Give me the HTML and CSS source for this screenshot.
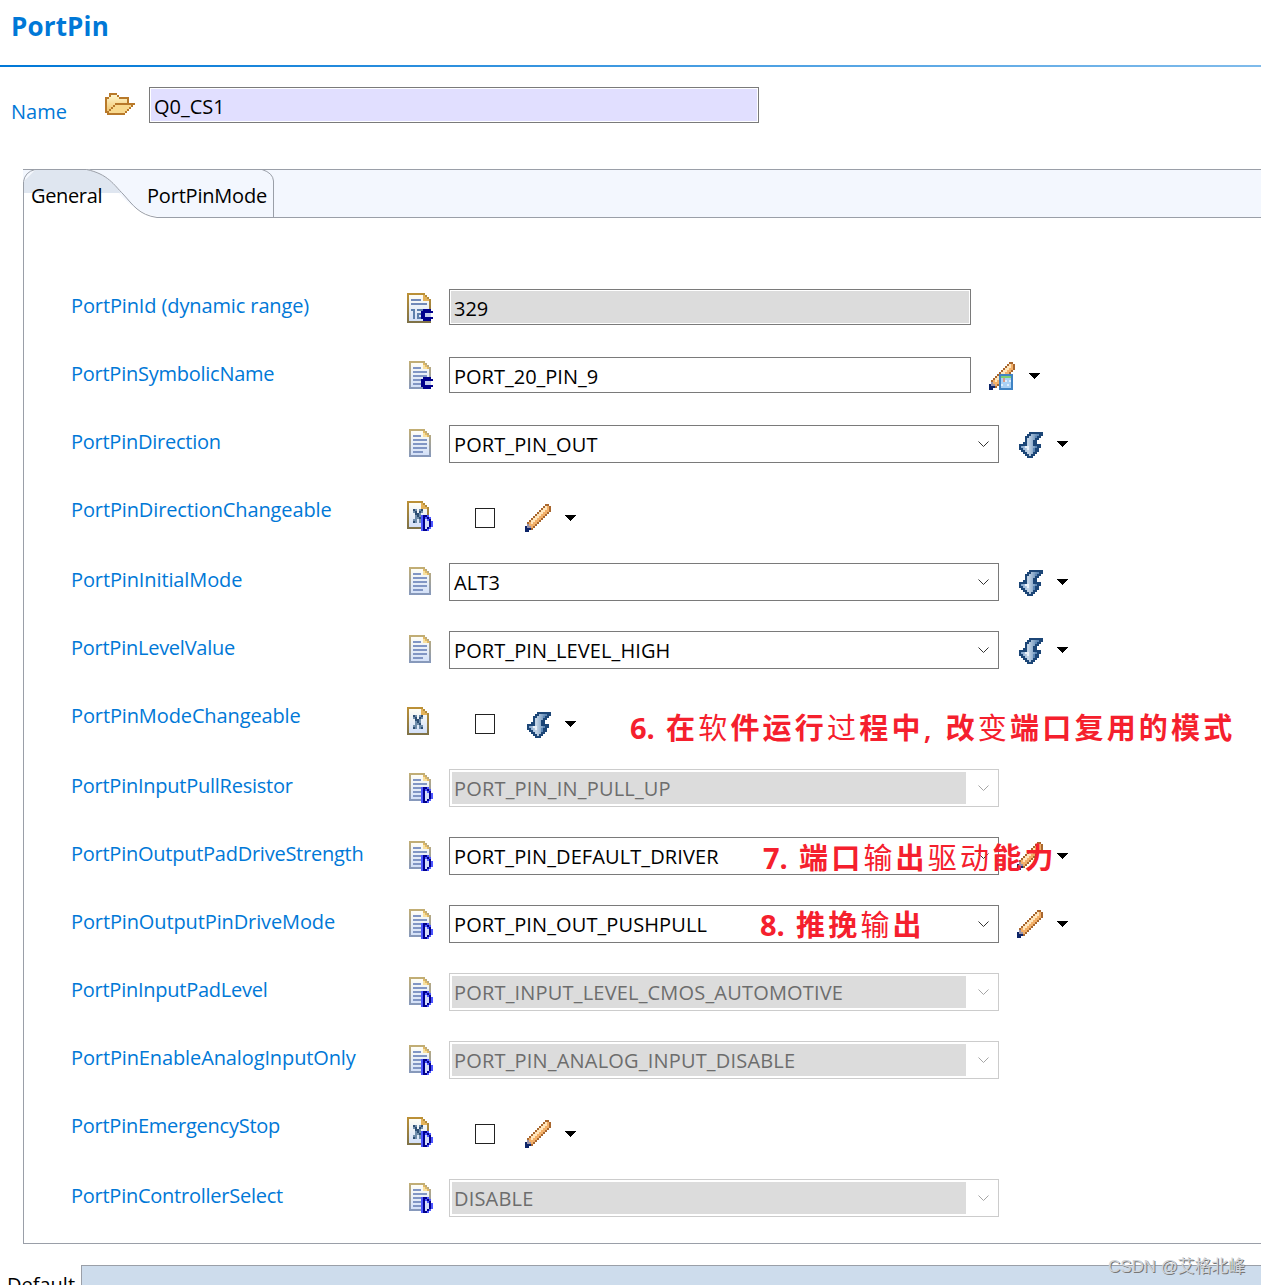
FILE: index.html
```html
<!DOCTYPE html>
<html lang="zh">
<head>
<meta charset="UTF-8">
<title>PortPin</title>
<link rel="stylesheet" href="styles.css">
</head>

<body>

<!-- icon sprites, one unit is one icon pixel -->
<svg class="sprites">
<defs>
<linearGradient id="paper" x1="0" y1="0" x2="0" y2="1">
<stop offset="0" stop-color="#fffef6"/><stop offset="1" stop-color="#d3e0f8"/>
</linearGradient>
<linearGradient id="edge" x1="0" y1="0" x2="0" y2="1">
<stop offset="0" stop-color="#c3ae72"/><stop offset="1" stop-color="#8598bd"/>
</linearGradient>
<linearGradient id="gold" x1="0" y1="0" x2="0" y2="1">
<stop offset="0" stop-color="#bd9136"/><stop offset="1" stop-color="#7d7148"/>
</linearGradient>
<linearGradient id="bolt" x1="0" y1="0" x2="1" y2="0">
<stop offset="0" stop-color="#7fa3cc"/><stop offset=".4" stop-color="#c7d7e8"/><stop offset="1" stop-color="#4f7cab"/>
</linearGradient>
<linearGradient id="folder" x1="0" y1="0" x2="0" y2="1">
<stop offset="0" stop-color="#fff6cc"/><stop offset="1" stop-color="#f0c670"/>
</linearGradient>

<symbol id="doc" viewBox="0 0 13 16">
<path fill="url(#edge)" d="M1 0h8v1h1v1h1v1h1v11h-11z"/>
<path fill="url(#paper)" d="M2 1h6v3h3v9h-9z"/>
<path fill="#e3b964" d="M8 1h1v1h1v1h1v1h-3z"/>
<path fill="#f7e0a0" d="M8 2h1v1h1v1h-2z"/>
<path fill="#8196c4" d="M3 3h4v1h-4zM3 5h7v1h-7zM3 7h7v1h-7zM3 9h7v1h-7zM3 11h5v1h-5z"/>
</symbol>

<symbol id="doc-num" viewBox="0 0 13 16">
<path fill="url(#gold)" d="M0 0h9v1h1v1h1v1h1v12h-12z"/>
<path fill="url(#paper)" d="M1 1h7v3h3v10h-10z"/>
<path fill="#e3b25a" d="M8 1h1v1h1v1h1v1h-3z"/>
<path fill="#7189b8" d="M2 3h5v1h-5zM2 5h8v1h-8z"/>
<path fill="#5d7fac" d="M2 8h2v5h-1v-4h-1zM5 8h3v3h-2v1h2v1h-3v-3h2v-1h-2zM9 8h2v5h-2z"/>
</symbol>

<symbol id="doc-x" viewBox="0 0 13 16">
<path fill="url(#gold)" d="M0 0h8v1h1v1h1v1h1v11h-11z"/>
<path fill="url(#paper)" d="M1 1h6v3h3v9h-9z"/>
<path fill="#e3b25a" d="M7 1h1v1h1v1h1v1h-3z"/>
<path fill="#6f8dab" d="M3 4h2v2h1v-2h2v2h-1v3h1v2h-2v-2h-1v2h-2v-2h1v-3h-1z"/>
<path fill="#2c4d72" d="M3 4h1v1h-1zM4 5h1v2h-1zM5 6h1v2h-1zM6 5h1v1h-1zM7 4h1v1h-1zM6 8h1v1h-1zM3 10h1v1h-1zM7 10h1v1h-1z"/>
</symbol>

<symbol id="mark-c" viewBox="0 0 13 16">
<path fill="#c3cdec" d="M9 10h3v2h-3z"/>
<path fill="#00008c" d="M8 8h4v1h1v1h-4v2h4v1h-1v1h-4v-1h-1v-4h1z"/>
</symbol>

<symbol id="mark-d" viewBox="0 0 13 16">
<path fill="#4c55ff" d="M7 7h4v1h1v2h1v3h-1v1h-1v1h-4z"/>
<path fill="#00008c" d="M8 7h2v1h1v1h1v1h-1v-1h-1v-1h-1v6h1v-1h1v-3h1v3h-1v1h-1v1h-2z"/>
<path fill="#d5dcf8" d="M9 9h1v1h1v3h-1v1h-1z"/>
</symbol>

<symbol id="pencil" viewBox="0 0 13 14">
<path fill="#a8672f" d="M10 0h2v1h1v3h-1v1h-1v1h-1v1h-1v1h-1v1h-1v1h-1v1h-1v1h-1v1h-2v1h-2v-3h1v-2h1v-1h1v-1h1v-1h1v-1h1v-1h1v-1h1v-1h1v-1h1z"/>
<path fill="#f3b069" d="M10 1h2v3h-1v1h-1v1h-1v1h-1v1h-1v1h-1v1h-1v1h-1v1h-1v-1h-1v-2h1v-1h1v-1h1v-1h1v-1h1v-1h1v-1h1v-1h1v-1h1z"/>
<path fill="#ffe6bd" d="M10 1h1v1h-1zM9 2h2v1h-1v1h-1v1h-1v1h-1v1h-1v1h-1v1h-1v1h-1v-2h1v-1h1v-1h1v-1h1v-1h1v-1h1z"/>
<path fill="#9a93a8" d="M1 10h1v1h1v1h-2z"/>
<path fill="#0c2468" d="M0 11h1v1h2v1h-1v1h-2z"/>
</symbol>

<symbol id="calc" viewBox="0 0 13 14">
<path fill="#3f83c4" d="M5 6h7v8h-7z"/>
<path fill="#a9d0f4" d="M6 8h5v5h-5z"/>
<path fill="#7ccf74" d="M6 7h5v1h-5z"/>
<path fill="#dceefe" d="M8 9h1v1h-1zM10 9h1v1h-1zM6 11h1v1h-1zM9 11h1v1h-1z"/>
<path fill="#d89a8a" d="M7 8h1v2h-1z"/>
</symbol>

<symbol id="lightning" viewBox="0 0 13 14">
<path fill="#1c4677" d="M6 1h7v2h-1v1h-1v1h-1v2h2v2h-1v2h-1v1h-1v1h-1v1h-3v-1h-1v-1h-1v-1h-1v-1h-1v-3h2v-1h1v-3h1v-1h1z"/>
<path fill="url(#bolt)" d="M7 2h4v1h-1v1h-1v1h-1v3h2v1h-1v1h-1v2h-1v1h-1v-1h-1v-1h-1v-1h-1v-1h-1v-1h3v-4h1v-1h1z"/>
<path fill="#5b86b5" d="M10 2h1v1h-1v1h-1v-1h1zM9 8h1v1h-1v2h-1v-2h1z"/>
<path fill="#e9f0f8" d="M4 8h2v1h-2zM5 9h1v1h-1z"/>
</symbol>

<symbol id="caret" viewBox="0 0 11 6">
<path d="M0 0h11v1h-1v1h-1v1h-1v1h-1v1h-1v1h-1v-1h-1v-1h-1v-1h-1v-1h-1v-1h-1z"/>
</symbol>
</defs>
</svg>

<header class="title">PortPin</header>

<div class="name-row">
<label class="label">Name</label>
<svg class="folder" viewBox="0 0 15 11">
<path fill="#b8792a" d="M2 0h4v1h1v1h5v3h3v1h-1v1h-1v1h-1v1h-1v1h-1v1h-9v-1h-1v-8h2z"/>
<path fill="url(#folder)" d="M3 1h3v1h1v1h4v2h-6v1h-1v1h-1v1h-1v1h-1v-6h1v-1h1z"/>
<path fill="#f8d98e" d="M5 6h8v1h-1v1h-1v1h-1v1h-8v-1h1v-1h1v-1h1z"/>
</svg>
<div class="input name-input">Q0_CS1</div>
</div>

<nav class="tabs">
<svg class="tab-shape" width="252" height="49" viewBox="0 0 252 49">
<path fill="#fff" d="M.5 49V12L12 .5H66C92 6 96 42 137 48V49z"/>
<path fill="#dfe6f0" d="M1 24V12L12 1H66C82 5 90 14 98 24z"/>
<path class="tab-line" d="M.5 49V12.500Q2 3 12 .5H63.500C85 5 91 16 100 25C110 36 116 46 134 48.500H138"/>
<path class="tab-line" d="M239 .5Q250 4 250.500 12V49"/>
</svg>
<span class="tab tab-general">General</span>
<span class="tab">PortPinMode</span>
</nav>

<main class="panel">

<div class="row">
<label class="label">PortPinId (dynamic range)</label>
<svg class="kind"><use href="#doc-num"/><use href="#mark-c"/></svg>
<div class="input readonly">329</div>
</div>

<div class="row">
<label class="label tight">PortPinSymbolicName</label>
<svg class="kind"><use href="#doc"/><use href="#mark-c"/></svg>
<div class="input">PORT_20_PIN_9</div>
<svg class="action"><use href="#pencil"/><use href="#calc"/></svg>
<svg class="caret"><use href="#caret"/></svg>
</div>

<div class="row">
<label class="label tight">PortPinDirection</label>
<svg class="kind"><use href="#doc"/></svg>
<div class="combo"><span class="value">PORT_PIN_OUT</span><svg class="chevron" viewBox="0 0 11 6"><path d="M.5 .5l5 5l5-5"/></svg></div>
<svg class="action"><use href="#lightning"/></svg>
<svg class="caret"><use href="#caret"/></svg>
</div>

<div class="row check-row">
<label class="label">PortPinDirectionChangeable</label>
<svg class="kind"><use href="#doc-x"/><use href="#mark-d"/></svg>
<span class="checkbox"></span>
<svg class="action"><use href="#pencil"/></svg>
<svg class="caret"><use href="#caret"/></svg>
</div>

<div class="row">
<label class="label">PortPinInitialMode</label>
<svg class="kind"><use href="#doc"/></svg>
<div class="combo"><span class="value">ALT3</span><svg class="chevron" viewBox="0 0 11 6"><path d="M.5 .5l5 5l5-5"/></svg></div>
<svg class="action"><use href="#lightning"/></svg>
<svg class="caret"><use href="#caret"/></svg>
</div>

<div class="row">
<label class="label tight">PortPinLevelValue</label>
<svg class="kind"><use href="#doc"/></svg>
<div class="combo"><span class="value">PORT_PIN_LEVEL_HIGH</span><svg class="chevron" viewBox="0 0 11 6"><path d="M.5 .5l5 5l5-5"/></svg></div>
<svg class="action"><use href="#lightning"/></svg>
<svg class="caret"><use href="#caret"/></svg>
</div>

<div class="row check-row">
<label class="label">PortPinModeChangeable</label>
<svg class="kind"><use href="#doc-x"/></svg>
<span class="checkbox"></span>
<svg class="action"><use href="#lightning"/></svg>
<svg class="caret"><use href="#caret"/></svg>
<div class="note note-6"><span class="num">6.</span>在<i>软</i>件运行<i>过</i>程中<span class="comma">,</span>改<i>变</i>端口复用的模式</div>
</div>

<div class="row">
<label class="label tight">PortPinInputPullResistor</label>
<svg class="kind"><use href="#doc"/><use href="#mark-d"/></svg>
<div class="combo disabled"><span class="value">PORT_PIN_IN_PULL_UP</span><svg class="chevron" viewBox="0 0 11 6"><path d="M.5 .5l5 5l5-5"/></svg></div>
</div>

<div class="row">
<label class="label tight">PortPinOutputPadDriveStrength</label>
<svg class="kind"><use href="#doc"/><use href="#mark-d"/></svg>
<div class="combo"><span class="value">PORT_PIN_DEFAULT_DRIVER</span><svg class="chevron" viewBox="0 0 11 6"><path d="M.5 .5l5 5l5-5"/></svg></div>
<svg class="action"><use href="#pencil"/></svg>
<svg class="caret"><use href="#caret"/></svg>
<div class="note note-7"><span class="num">7.</span>端口<i>输</i>出<i>驱动</i>能力</div>
</div>

<div class="row">
<label class="label">PortPinOutputPinDriveMode</label>
<svg class="kind"><use href="#doc"/><use href="#mark-d"/></svg>
<div class="combo"><span class="value">PORT_PIN_OUT_PUSHPULL</span><svg class="chevron" viewBox="0 0 11 6"><path d="M.5 .5l5 5l5-5"/></svg></div>
<svg class="action"><use href="#pencil"/></svg>
<svg class="caret"><use href="#caret"/></svg>
<div class="note note-8"><span class="num">8.</span>推挽<i>输</i>出</div>
</div>

<div class="row">
<label class="label tight">PortPinInputPadLevel</label>
<svg class="kind"><use href="#doc"/><use href="#mark-d"/></svg>
<div class="combo disabled"><span class="value">PORT_INPUT_LEVEL_CMOS_AUTOMOTIVE</span><svg class="chevron" viewBox="0 0 11 6"><path d="M.5 .5l5 5l5-5"/></svg></div>
</div>

<div class="row">
<label class="label">PortPinEnableAnalogInputOnly</label>
<svg class="kind"><use href="#doc"/><use href="#mark-d"/></svg>
<div class="combo disabled"><span class="value">PORT_PIN_ANALOG_INPUT_DISABLE</span><svg class="chevron" viewBox="0 0 11 6"><path d="M.5 .5l5 5l5-5"/></svg></div>
</div>

<div class="row check-row">
<label class="label tight">PortPinEmergencyStop</label>
<svg class="kind"><use href="#doc-x"/><use href="#mark-d"/></svg>
<span class="checkbox"></span>
<svg class="action"><use href="#pencil"/></svg>
<svg class="caret"><use href="#caret"/></svg>
</div>

<div class="row">
<label class="label tight">PortPinControllerSelect</label>
<svg class="kind"><use href="#doc"/><use href="#mark-d"/></svg>
<div class="combo disabled"><span class="value">DISABLE</span><svg class="chevron" viewBox="0 0 11 6"><path d="M.5 .5l5 5l5-5"/></svg></div>
</div>

</main>

<footer class="bottom">
<span class="default">Default</span>
<div class="default-bar"></div>
<span class="watermark">CSDN @艾格北峰</span>
</footer>

</body>
</html>
```
FILE: styles.css
```css
*{
    box-sizing:border-box;
}

body{
    margin:0;
    height:1285px;
    overflow:hidden;
    background:#fff;
    font-family:"Open Sans", "Noto Sans CJK SC", sans-serif;
    font-size:20px;
    line-height:28px;
    color:#000;
}

svg{
    display:block;
    flex:none;
    shape-rendering:crispEdges;
}

.sprites{
    position:absolute;
    width:0;
    height:0;
}

.title{
    height:67px;
    padding:12px 0 0 11px;
    font-size:26px;
    font-weight:bold;
    letter-spacing:0.15px;
    color:#0078d7;
    border-bottom:2px solid;
    border-image:linear-gradient(to right, #0078d7, #7fbbeb) 1;
}

.label{
    color:#0078d7;
    white-space:nowrap;
}

.name-row{
    display:flex;
    height:102px;
    padding:20px 0 0 11px;
}

.name-row .label{
    width:94px;
    padding-top:11px;
}

.folder{
    width:30px;
    height:22px;
    margin:6px 14px 0 0;
}

.input{
    width:522px;
    height:36px;
    padding:0 4px;
    border:1px solid #7a7a7a;
    box-shadow:inset 0 0 0 1px #fff;
    line-height:38px;
    white-space:nowrap;
}

.name-input{
    width:610px;
    background:#e1dfff;
}

.readonly{
    background:#dcdcdc;
}

/* tabs */

.tabs{
    position:relative;
    display:flex;
    height:49px;
    margin-left:23px;
    border-top:1px solid #9a9fa8;
    border-bottom:1px solid #9a9fa8;
    background:#f3f7fe;
}

.tab-shape{
    position:absolute;
    left:0;
    top:-1px;
    shape-rendering:auto;
}

.tab-line{
    fill:none;
    stroke:#9a9fa8;
}

.tab{
    position:relative;
    padding-top:12px;
    letter-spacing:-0.2px;
}

.tab-general{
    width:124px;
    padding-left:8px;
    letter-spacing:-0.35px;
}

/* form */

.panel{
    height:1026px;
    margin-left:23px;
    padding:71px 0 0 47px;
    border-left:1px solid #9a9fa8;
    border-bottom:1px solid #9a9fa8;
}

.row{
    position:relative;
    display:flex;
    height:68px;
}

.row .label{
    width:336px;
    padding-top:3px;
    letter-spacing:-0.12px;
}

.row .tight{
    letter-spacing:-0.25px;
}

.kind{
    width:26px;
    height:32px;
    margin:4px 16px 0 0;
}

.combo{
    display:flex;
    width:550px;
    height:38px;
    padding:2px;
    border:1px solid #7a7a7a;
}

.combo .value{
    width:514px;
    height:32px;
    padding-left:2px;
    line-height:33px;
    letter-spacing:0.1px;
    white-space:nowrap;
}

.chevron{
    width:11px;
    height:6px;
    margin:13px 0 0 12px;
    fill:none;
    stroke:#333;
    shape-rendering:auto;
}

.disabled{
    border-color:#ccc;
    color:#6d6d6d;
}

.combo.disabled .value{
    letter-spacing:0.18px;
    background:#dcdcdc;
}

.disabled .chevron{
    stroke:#a5a5a5;
}

.action{
    width:26px;
    height:28px;
    margin:5px 14px 0 18px;
}

.caret{
    width:11px;
    height:6px;
    margin-top:16px;
}

.check-row{
    height:70px;
}

.check-row .kind{
    margin-top:8px;
}

.checkbox{
    width:20px;
    height:20px;
    margin:15px 0 0 26px;
    border:1px solid #222;
}

.check-row .action{
    margin:11px 14px 0 30px;
}

.check-row .caret{
    margin-top:22px;
}

/* red notes lie over the form */

.note{
    position:absolute;
    font-size:29px;
    font-weight:bold;
    line-height:36px;
    letter-spacing:3.2px;
    color:#f5202d;
    white-space:nowrap;
}

.note i{
    font-style:normal;
    font-weight:400;
}

.num{
    display:inline-block;
    width:36px;
    letter-spacing:0;
}

.comma{
    display:inline-block;
    width:22px;
    font-weight:600;
}

.note-6{
    left:559px;
    top:11px;
}

.note-7{
    left:692px;
    top:3px;
}

.note-8{
    left:689px;
    top:2px;
}

/* bottom bar, cut off by the window edge */

.bottom{
    position:relative;
    display:flex;
    height:41px;
    padding-top:21px;
}

.default{
    width:81px;
    padding:6px 0 0 7px;
}

.default-bar{
    flex:1;
    border-top:1px solid #9a9fa8;
    border-left:1px solid #9a9fa8;
    background:#cddcec;
}

.watermark{
    position:absolute;
    left:1108px;
    top:9px;
    font-family:"Liberation Sans", "Noto Sans CJK SC", sans-serif;
    font-size:17px;
    letter-spacing:-0.1px;
    color:#d0d4d8;
    text-shadow:1px 1px 0 #777;
    white-space:nowrap;
}
```
